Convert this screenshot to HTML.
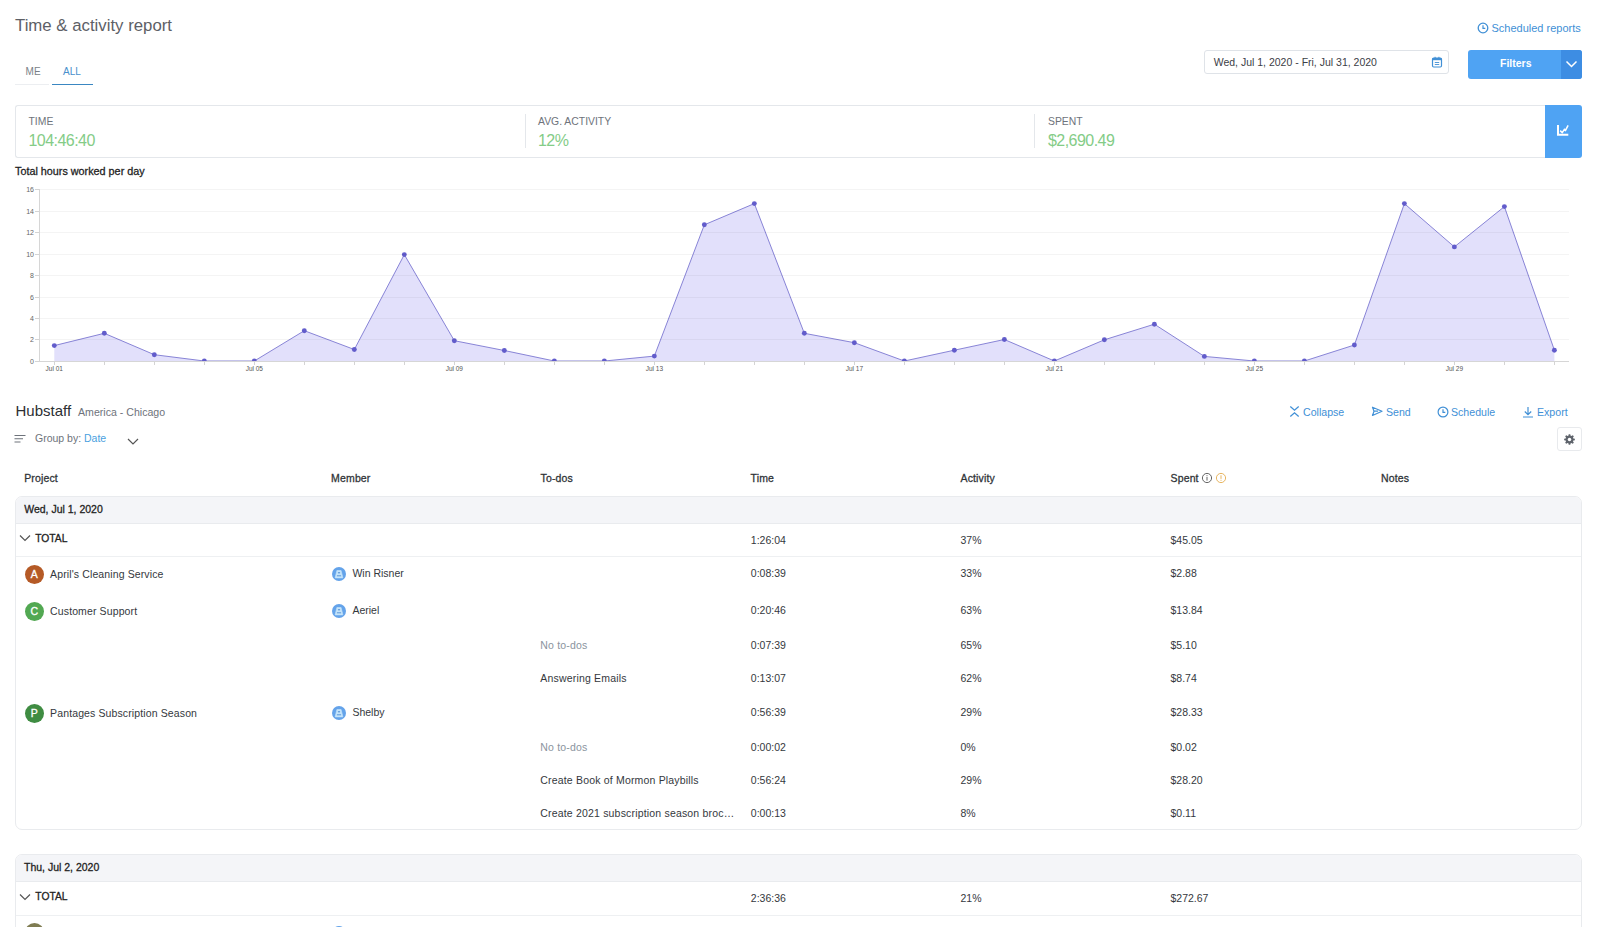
<!DOCTYPE html>
<html><head><meta charset="utf-8"><title>Time &amp; activity report</title>
<style>
html,body{margin:0;padding:0;background:#fff;}
body{width:1600px;height:927px;overflow:hidden;position:relative;font-family:"Liberation Sans", sans-serif;}
</style></head><body>
<div style="position:absolute;left:15.00px;top:18.00px;font-size:16.8px;line-height:16.8px;color:#5d6066;font-weight:400;letter-spacing:0px;white-space:nowrap;">Time &amp; activity report</div>
<div style="position:absolute;left:25.60px;top:67.00px;font-size:10px;line-height:10px;color:#7a7f87;font-weight:400;letter-spacing:0px;white-space:nowrap;">ME</div>
<div style="position:absolute;left:63.00px;top:67.00px;font-size:10px;line-height:10px;color:#4a90cc;font-weight:400;letter-spacing:0px;white-space:nowrap;">ALL</div>
<div style="position:absolute;left:15px;top:84px;width:34px;height:1px;box-sizing:border-box;background:#eceef1"></div>
<div style="position:absolute;left:52px;top:83.8px;width:41px;height:1.6000000000000085px;box-sizing:border-box;background:#3a87c2"></div>
<svg style="position:absolute;left:1477px;top:22px;" width="12" height="12" viewBox="0 0 12 12"><circle cx="6" cy="6" r="4.8" fill="none" stroke="#4190d6" stroke-width="1.3"/><path d="M6 3.3V6.3H8.3" fill="none" stroke="#4190d6" stroke-width="1.2"/></svg>
<div style="position:absolute;left:1491.50px;top:23.00px;font-size:11px;line-height:11px;color:#4190d6;font-weight:400;letter-spacing:0px;white-space:nowrap;">Scheduled reports</div>
<div style="position:absolute;left:1204px;top:50px;width:245px;height:24px;box-sizing:border-box;border:1px solid #dfe3e8;border-radius:3px;background:#fff"></div>
<div style="position:absolute;left:1213.70px;top:57.00px;font-size:10.5px;line-height:10.5px;color:#3c4046;font-weight:400;letter-spacing:0px;white-space:nowrap;">Wed, Jul 1, 2020 - Fri, Jul 31, 2020</div>
<svg style="position:absolute;left:1431px;top:56px;" width="12" height="12" viewBox="0 0 12 12"><rect x="1.5" y="2" width="9" height="9" rx="1.2" fill="none" stroke="#4190d6" stroke-width="1.2"/><rect x="1.5" y="2" width="9" height="2.2" fill="#4190d6"/><rect x="3.6" y="0.8" width="1" height="2" fill="#4190d6"/><rect x="7.4" y="0.8" width="1" height="2" fill="#4190d6"/><rect x="3.8" y="6" width="4.4" height="0.9" fill="#4190d6"/><rect x="3.8" y="8" width="4.4" height="0.9" fill="#4190d6"/></svg>
<div style="position:absolute;left:1468px;top:50px;width:114px;height:29px;box-sizing:border-box;background:#4fa3f3;border-radius:3px"></div>
<div style="position:absolute;left:1561px;top:50px;width:21px;height:29px;box-sizing:border-box;background:#3d8de3;border-radius:0 3px 3px 0"></div>
<div style="position:absolute;left:1500.00px;top:58.00px;font-size:10.5px;line-height:10.5px;color:#fff;font-weight:700;letter-spacing:0px;white-space:nowrap;">Filters</div>
<svg style="position:absolute;left:1565px;top:59px;" width="13" height="10" viewBox="0 0 13 10"><path d="M1.5 2.5L6.5 7.5L11.5 2.5" fill="none" stroke="#fff" stroke-width="1.5"/></svg>
<div style="position:absolute;left:15px;top:105px;width:1531px;height:53px;box-sizing:border-box;border:1px solid #e4e7eb;border-right:none;border-radius:3px 0 0 3px;background:#fff"></div>
<div style="position:absolute;left:1545px;top:105px;width:37px;height:53px;box-sizing:border-box;background:#4fa3f3;border-radius:0 3px 3px 0"></div>
<svg style="position:absolute;left:1555px;top:123px;" width="16" height="15" viewBox="0 0 16 15"><path d="M3 2V11.7H13.3" fill="none" stroke="#fff" stroke-width="2"/><path d="M5.2 7.6L7.3 9.7L9.5 6.2L10.4 7.6L13.1 2.4" fill="none" stroke="#fff" stroke-width="1.5" stroke-linejoin="round"/></svg>
<div style="position:absolute;left:525px;top:114px;width:1px;height:34px;box-sizing:border-box;background:#e4e7eb"></div>
<div style="position:absolute;left:1034px;top:114px;width:1px;height:34px;box-sizing:border-box;background:#e4e7eb"></div>
<div style="position:absolute;left:28.50px;top:117.00px;font-size:10.4px;line-height:10.4px;color:#6e737b;font-weight:400;letter-spacing:0px;white-space:nowrap;">TIME</div>
<div style="position:absolute;left:28.50px;top:133.00px;font-size:16px;line-height:16px;color:#84cc87;font-weight:400;letter-spacing:-0.55px;white-space:nowrap;">104:46:40</div>
<div style="position:absolute;left:538.00px;top:117.00px;font-size:10.4px;line-height:10.4px;color:#6e737b;font-weight:400;letter-spacing:0px;white-space:nowrap;">AVG. ACTIVITY</div>
<div style="position:absolute;left:538.00px;top:133.00px;font-size:16px;line-height:16px;color:#84cc87;font-weight:400;letter-spacing:-0.55px;white-space:nowrap;">12%</div>
<div style="position:absolute;left:1048.00px;top:117.00px;font-size:10.4px;line-height:10.4px;color:#6e737b;font-weight:400;letter-spacing:0px;white-space:nowrap;">SPENT</div>
<div style="position:absolute;left:1048.00px;top:133.00px;font-size:16px;line-height:16px;color:#84cc87;font-weight:400;letter-spacing:-0.55px;white-space:nowrap;">$2,690.49</div>
<div style="position:absolute;left:15.00px;top:166.00px;font-size:10.8px;line-height:10.8px;color:#222;font-weight:400;letter-spacing:0px;white-space:nowrap;-webkit-text-stroke:0.28px #222;">Total hours worked per day</div>
<svg style="position:absolute;left:0px;top:180px;" width="1600" height="200" viewBox="0 180 1600 200"><line x1="35" y1="361.5" x2="40" y2="361.5" stroke="#d4d4d4" stroke-width="1"/><text x="34" y="363.90" text-anchor="end" font-size="7" fill="#666" font-family="Liberation Sans">0</text><line x1="35" y1="339.5" x2="40" y2="339.5" stroke="#d4d4d4" stroke-width="1"/><text x="34" y="341.90" text-anchor="end" font-size="7" fill="#666" font-family="Liberation Sans">2</text><line x1="35" y1="318.5" x2="40" y2="318.5" stroke="#d4d4d4" stroke-width="1"/><text x="34" y="320.90" text-anchor="end" font-size="7" fill="#666" font-family="Liberation Sans">4</text><line x1="35" y1="297.5" x2="40" y2="297.5" stroke="#d4d4d4" stroke-width="1"/><text x="34" y="299.90" text-anchor="end" font-size="7" fill="#666" font-family="Liberation Sans">6</text><line x1="35" y1="275.5" x2="40" y2="275.5" stroke="#d4d4d4" stroke-width="1"/><text x="34" y="277.90" text-anchor="end" font-size="7" fill="#666" font-family="Liberation Sans">8</text><line x1="35" y1="254.5" x2="40" y2="254.5" stroke="#d4d4d4" stroke-width="1"/><text x="34" y="256.90" text-anchor="end" font-size="7" fill="#666" font-family="Liberation Sans">10</text><line x1="35" y1="232.5" x2="40" y2="232.5" stroke="#d4d4d4" stroke-width="1"/><text x="34" y="234.90" text-anchor="end" font-size="7" fill="#666" font-family="Liberation Sans">12</text><line x1="35" y1="211.5" x2="40" y2="211.5" stroke="#d4d4d4" stroke-width="1"/><text x="34" y="213.90" text-anchor="end" font-size="7" fill="#666" font-family="Liberation Sans">14</text><line x1="35" y1="189.5" x2="40" y2="189.5" stroke="#d4d4d4" stroke-width="1"/><text x="34" y="191.90" text-anchor="end" font-size="7" fill="#666" font-family="Liberation Sans">16</text><clipPath id="cp"><rect x="0" y="0" width="1600" height="361"/></clipPath><g clip-path="url(#cp)"><polygon points="54.30,361 54.30,345.60 104.30,333.30 154.31,354.70 204.31,361.00 254.31,361.00 304.31,330.70 354.32,349.50 404.32,254.60 454.32,340.70 504.33,350.50 554.33,361.00 604.33,361.00 654.34,356.10 704.34,224.80 754.34,203.60 804.34,333.30 854.35,342.70 904.35,361.00 954.35,350.20 1004.36,339.50 1054.36,361.00 1104.36,339.80 1154.37,324.20 1204.37,356.40 1254.37,361.00 1304.38,361.00 1354.38,345.00 1404.38,203.60 1454.38,246.90 1504.39,206.60 1554.39,350.20 1554.39,361" fill="#e2e0fb"/><polyline points="54.30,345.60 104.30,333.30 154.31,354.70 204.31,361.00 254.31,361.00 304.31,330.70 354.32,349.50 404.32,254.60 454.32,340.70 504.33,350.50 554.33,361.00 604.33,361.00 654.34,356.10 704.34,224.80 754.34,203.60 804.34,333.30 854.35,342.70 904.35,361.00 954.35,350.20 1004.36,339.50 1054.36,361.00 1104.36,339.80 1154.37,324.20 1204.37,356.40 1254.37,361.00 1304.38,361.00 1354.38,345.00 1404.38,203.60 1454.38,246.90 1504.39,206.60 1554.39,350.20" fill="none" stroke="#7570cf" stroke-width="0.85"/><circle cx="54.30" cy="345.60" r="2.45" fill="#625ccb"/><circle cx="104.30" cy="333.30" r="2.45" fill="#625ccb"/><circle cx="154.31" cy="354.70" r="2.45" fill="#625ccb"/><circle cx="204.31" cy="361.00" r="2.45" fill="#625ccb"/><circle cx="254.31" cy="361.00" r="2.45" fill="#625ccb"/><circle cx="304.31" cy="330.70" r="2.45" fill="#625ccb"/><circle cx="354.32" cy="349.50" r="2.45" fill="#625ccb"/><circle cx="404.32" cy="254.60" r="2.45" fill="#625ccb"/><circle cx="454.32" cy="340.70" r="2.45" fill="#625ccb"/><circle cx="504.33" cy="350.50" r="2.45" fill="#625ccb"/><circle cx="554.33" cy="361.00" r="2.45" fill="#625ccb"/><circle cx="604.33" cy="361.00" r="2.45" fill="#625ccb"/><circle cx="654.34" cy="356.10" r="2.45" fill="#625ccb"/><circle cx="704.34" cy="224.80" r="2.45" fill="#625ccb"/><circle cx="754.34" cy="203.60" r="2.45" fill="#625ccb"/><circle cx="804.34" cy="333.30" r="2.45" fill="#625ccb"/><circle cx="854.35" cy="342.70" r="2.45" fill="#625ccb"/><circle cx="904.35" cy="361.00" r="2.45" fill="#625ccb"/><circle cx="954.35" cy="350.20" r="2.45" fill="#625ccb"/><circle cx="1004.36" cy="339.50" r="2.45" fill="#625ccb"/><circle cx="1054.36" cy="361.00" r="2.45" fill="#625ccb"/><circle cx="1104.36" cy="339.80" r="2.45" fill="#625ccb"/><circle cx="1154.37" cy="324.20" r="2.45" fill="#625ccb"/><circle cx="1204.37" cy="356.40" r="2.45" fill="#625ccb"/><circle cx="1254.37" cy="361.00" r="2.45" fill="#625ccb"/><circle cx="1304.38" cy="361.00" r="2.45" fill="#625ccb"/><circle cx="1354.38" cy="345.00" r="2.45" fill="#625ccb"/><circle cx="1404.38" cy="203.60" r="2.45" fill="#625ccb"/><circle cx="1454.38" cy="246.90" r="2.45" fill="#625ccb"/><circle cx="1504.39" cy="206.60" r="2.45" fill="#625ccb"/><circle cx="1554.39" cy="350.20" r="2.45" fill="#625ccb"/></g><line x1="40" y1="339.5" x2="1569" y2="339.5" stroke="rgba(0,0,0,0.045)" stroke-width="1"/><line x1="40" y1="318.5" x2="1569" y2="318.5" stroke="rgba(0,0,0,0.045)" stroke-width="1"/><line x1="40" y1="297.5" x2="1569" y2="297.5" stroke="rgba(0,0,0,0.045)" stroke-width="1"/><line x1="40" y1="275.5" x2="1569" y2="275.5" stroke="rgba(0,0,0,0.045)" stroke-width="1"/><line x1="40" y1="254.5" x2="1569" y2="254.5" stroke="rgba(0,0,0,0.045)" stroke-width="1"/><line x1="40" y1="232.5" x2="1569" y2="232.5" stroke="rgba(0,0,0,0.045)" stroke-width="1"/><line x1="40" y1="211.5" x2="1569" y2="211.5" stroke="rgba(0,0,0,0.045)" stroke-width="1"/><line x1="40" y1="189.5" x2="1569" y2="189.5" stroke="rgba(0,0,0,0.045)" stroke-width="1"/><line x1="39.5" y1="189" x2="39.5" y2="362" stroke="#d6d6d6" stroke-width="1"/><line x1="39" y1="361.5" x2="1569" y2="361.5" stroke="#d6d6d6" stroke-width="1"/><line x1="54.5" y1="362" x2="54.5" y2="365" stroke="#d4d4d4" stroke-width="1"/><text x="54.30" y="371.00" text-anchor="middle" font-size="6.5" fill="#555" font-family="Liberation Sans">Jul 01</text><line x1="104.5" y1="362" x2="104.5" y2="365" stroke="#d4d4d4" stroke-width="1"/><line x1="154.5" y1="362" x2="154.5" y2="365" stroke="#d4d4d4" stroke-width="1"/><line x1="204.5" y1="362" x2="204.5" y2="365" stroke="#d4d4d4" stroke-width="1"/><line x1="254.5" y1="362" x2="254.5" y2="365" stroke="#d4d4d4" stroke-width="1"/><text x="254.31" y="371.00" text-anchor="middle" font-size="6.5" fill="#555" font-family="Liberation Sans">Jul 05</text><line x1="304.5" y1="362" x2="304.5" y2="365" stroke="#d4d4d4" stroke-width="1"/><line x1="354.5" y1="362" x2="354.5" y2="365" stroke="#d4d4d4" stroke-width="1"/><line x1="404.5" y1="362" x2="404.5" y2="365" stroke="#d4d4d4" stroke-width="1"/><line x1="454.5" y1="362" x2="454.5" y2="365" stroke="#d4d4d4" stroke-width="1"/><text x="454.32" y="371.00" text-anchor="middle" font-size="6.5" fill="#555" font-family="Liberation Sans">Jul 09</text><line x1="504.5" y1="362" x2="504.5" y2="365" stroke="#d4d4d4" stroke-width="1"/><line x1="554.5" y1="362" x2="554.5" y2="365" stroke="#d4d4d4" stroke-width="1"/><line x1="604.5" y1="362" x2="604.5" y2="365" stroke="#d4d4d4" stroke-width="1"/><line x1="654.5" y1="362" x2="654.5" y2="365" stroke="#d4d4d4" stroke-width="1"/><text x="654.34" y="371.00" text-anchor="middle" font-size="6.5" fill="#555" font-family="Liberation Sans">Jul 13</text><line x1="704.5" y1="362" x2="704.5" y2="365" stroke="#d4d4d4" stroke-width="1"/><line x1="754.5" y1="362" x2="754.5" y2="365" stroke="#d4d4d4" stroke-width="1"/><line x1="804.5" y1="362" x2="804.5" y2="365" stroke="#d4d4d4" stroke-width="1"/><line x1="854.5" y1="362" x2="854.5" y2="365" stroke="#d4d4d4" stroke-width="1"/><text x="854.35" y="371.00" text-anchor="middle" font-size="6.5" fill="#555" font-family="Liberation Sans">Jul 17</text><line x1="904.5" y1="362" x2="904.5" y2="365" stroke="#d4d4d4" stroke-width="1"/><line x1="954.5" y1="362" x2="954.5" y2="365" stroke="#d4d4d4" stroke-width="1"/><line x1="1004.5" y1="362" x2="1004.5" y2="365" stroke="#d4d4d4" stroke-width="1"/><line x1="1054.5" y1="362" x2="1054.5" y2="365" stroke="#d4d4d4" stroke-width="1"/><text x="1054.36" y="371.00" text-anchor="middle" font-size="6.5" fill="#555" font-family="Liberation Sans">Jul 21</text><line x1="1104.5" y1="362" x2="1104.5" y2="365" stroke="#d4d4d4" stroke-width="1"/><line x1="1154.5" y1="362" x2="1154.5" y2="365" stroke="#d4d4d4" stroke-width="1"/><line x1="1204.5" y1="362" x2="1204.5" y2="365" stroke="#d4d4d4" stroke-width="1"/><line x1="1254.5" y1="362" x2="1254.5" y2="365" stroke="#d4d4d4" stroke-width="1"/><text x="1254.37" y="371.00" text-anchor="middle" font-size="6.5" fill="#555" font-family="Liberation Sans">Jul 25</text><line x1="1304.5" y1="362" x2="1304.5" y2="365" stroke="#d4d4d4" stroke-width="1"/><line x1="1354.5" y1="362" x2="1354.5" y2="365" stroke="#d4d4d4" stroke-width="1"/><line x1="1404.5" y1="362" x2="1404.5" y2="365" stroke="#d4d4d4" stroke-width="1"/><line x1="1454.5" y1="362" x2="1454.5" y2="365" stroke="#d4d4d4" stroke-width="1"/><text x="1454.38" y="371.00" text-anchor="middle" font-size="6.5" fill="#555" font-family="Liberation Sans">Jul 29</text><line x1="1504.5" y1="362" x2="1504.5" y2="365" stroke="#d4d4d4" stroke-width="1"/><line x1="1554.5" y1="362" x2="1554.5" y2="365" stroke="#d4d4d4" stroke-width="1"/></svg>
<div style="position:absolute;left:15.50px;top:403.00px;font-size:15px;line-height:15px;color:#2c2f33;font-weight:400;letter-spacing:0px;white-space:nowrap;">Hubstaff</div>
<div style="position:absolute;left:78.00px;top:407.00px;font-size:10.6px;line-height:10.6px;color:#6e737b;font-weight:400;letter-spacing:0px;white-space:nowrap;">America - Chicago</div>
<svg style="position:absolute;left:14px;top:434px;" width="12" height="10" viewBox="0 0 12 10"><path d="M0.5 1.5H11.5M0.5 4.8H9M0.5 8H6.5" stroke="#6e737b" stroke-width="1.1"/></svg>
<div style="position:absolute;left:35.00px;top:433.00px;font-size:10.5px;line-height:10.5px;color:#6e737b;font-weight:400;letter-spacing:0px;white-space:nowrap;">Group by: <span style="color:#4a9fe0">Date</span></div>
<svg style="position:absolute;left:127px;top:437px;" width="12" height="9" viewBox="0 0 12 9"><path d="M1 2L6 7L11 2" fill="none" stroke="#555" stroke-width="1.2"/></svg>
<svg style="position:absolute;left:1289px;top:405px;" width="11" height="13" viewBox="0 0 11 13"><path d="M1.3 1.5L5.5 5.2L9.7 1.5M1.3 11.5L5.5 7.8L9.7 11.5" fill="none" stroke="#4190d6" stroke-width="1.3"/></svg>
<div style="position:absolute;left:1303.00px;top:407.00px;font-size:10.6px;line-height:10.6px;color:#4190d6;font-weight:400;letter-spacing:0px;white-space:nowrap;">Collapse</div>
<svg style="position:absolute;left:1371px;top:406px;" width="12" height="11" viewBox="0 0 12 11"><path d="M1.5 1.2L11 5.2L1.5 9.5L3 5.2Z M3 5.2H7" fill="none" stroke="#4190d6" stroke-width="1.2" stroke-linejoin="round"/></svg>
<div style="position:absolute;left:1386.00px;top:407.00px;font-size:10.6px;line-height:10.6px;color:#4190d6;font-weight:400;letter-spacing:0px;white-space:nowrap;">Send</div>
<svg style="position:absolute;left:1436.5px;top:405.5px;" width="12" height="12" viewBox="0 0 12 12"><circle cx="6" cy="6" r="4.9" fill="none" stroke="#4190d6" stroke-width="1.2"/><path d="M6 3.3V6.3H8.3" fill="none" stroke="#4190d6" stroke-width="1.2"/></svg>
<div style="position:absolute;left:1451.00px;top:407.00px;font-size:10.6px;line-height:10.6px;color:#4190d6;font-weight:400;letter-spacing:0px;white-space:nowrap;">Schedule</div>
<svg style="position:absolute;left:1522px;top:406px;" width="12" height="12" viewBox="0 0 12 12"><path d="M6 1V8.5M2.8 5.5L6 8.7L9.2 5.5M1 11H11" fill="none" stroke="#4190d6" stroke-width="1.2"/></svg>
<div style="position:absolute;left:1537.00px;top:407.00px;font-size:10.6px;line-height:10.6px;color:#4190d6;font-weight:400;letter-spacing:0px;white-space:nowrap;">Export</div>
<div style="position:absolute;left:1557px;top:426.5px;width:25px;height:24.0px;box-sizing:border-box;border:1px solid #e8eaed;border-radius:3px;background:#fff"></div>
<svg style="position:absolute;left:1564px;top:434px;" width="11" height="11" viewBox="0 0 11 11"><polygon points="4.75,0.15 6.25,0.15 6.84,2.27 8.75,1.19 9.81,2.25 8.73,4.16 10.85,4.75 10.85,6.25 8.73,6.84 9.81,8.75 8.75,9.81 6.84,8.73 6.25,10.85 4.75,10.85 4.16,8.73 2.25,9.81 1.19,8.75 2.27,6.84 0.15,6.25 0.15,4.75 2.27,4.16 1.19,2.25 2.25,1.19 4.16,2.27" fill="#5f646c"/><circle cx="5.5" cy="5.5" r="3.7" fill="#5f646c"/><circle cx="5.5" cy="5.5" r="1.75" fill="#fff"/></svg>
<div style="position:absolute;left:24.20px;top:473.00px;font-size:10.5px;line-height:10.5px;color:#2f3337;font-weight:400;letter-spacing:0.15px;white-space:nowrap;-webkit-text-stroke:0.28px #2f3337;">Project</div>
<div style="position:absolute;left:331.10px;top:473.00px;font-size:10.5px;line-height:10.5px;color:#2f3337;font-weight:400;letter-spacing:0.15px;white-space:nowrap;-webkit-text-stroke:0.28px #2f3337;">Member</div>
<div style="position:absolute;left:540.50px;top:473.00px;font-size:10.5px;line-height:10.5px;color:#2f3337;font-weight:400;letter-spacing:0.15px;white-space:nowrap;-webkit-text-stroke:0.28px #2f3337;">To-dos</div>
<div style="position:absolute;left:750.50px;top:473.00px;font-size:10.5px;line-height:10.5px;color:#2f3337;font-weight:400;letter-spacing:0.15px;white-space:nowrap;-webkit-text-stroke:0.28px #2f3337;">Time</div>
<div style="position:absolute;left:960.50px;top:473.00px;font-size:10.5px;line-height:10.5px;color:#2f3337;font-weight:400;letter-spacing:0.15px;white-space:nowrap;-webkit-text-stroke:0.28px #2f3337;">Activity</div>
<div style="position:absolute;left:1170.50px;top:473.00px;font-size:10.5px;line-height:10.5px;color:#2f3337;font-weight:400;letter-spacing:0.15px;white-space:nowrap;-webkit-text-stroke:0.28px #2f3337;">Spent</div>
<div style="position:absolute;left:1381.00px;top:473.00px;font-size:10.5px;line-height:10.5px;color:#2f3337;font-weight:400;letter-spacing:0.15px;white-space:nowrap;-webkit-text-stroke:0.28px #2f3337;">Notes</div>
<svg style="position:absolute;left:1201px;top:472px;" width="12" height="12" viewBox="0 0 12 12"><circle cx="6" cy="6" r="4.6" fill="none" stroke="#666" stroke-width="1"/><rect x="5.5" y="5" width="1" height="3.6" fill="#666"/><rect x="5.5" y="3.2" width="1" height="1" fill="#666"/></svg>
<svg style="position:absolute;left:1215px;top:472px;" width="12" height="12" viewBox="0 0 12 12"><circle cx="6" cy="6" r="4.6" fill="none" stroke="#e8b662" stroke-width="1"/><rect x="5.5" y="3.3" width="1" height="3.6" fill="#e8b662"/><rect x="5.5" y="7.8" width="1" height="1" fill="#e8b662"/></svg>
<div style="position:absolute;left:15px;top:496px;width:1567px;height:334px;box-sizing:border-box;border:1px solid #e9ebee;border-radius:7px;background:#fff;overflow:hidden"><div style="height:26px;background:#f4f5f8;border-bottom:1px solid #e9ebee"></div></div>
<div style="position:absolute;left:24.20px;top:504.00px;font-size:10.5px;line-height:10.5px;color:#222;font-weight:400;letter-spacing:0px;white-space:nowrap;-webkit-text-stroke:0.28px #222;">Wed, Jul 1, 2020</div>
<svg style="position:absolute;left:18px;top:533px;" width="14" height="10" viewBox="0 0 14 10"><path d="M2 2.5L7 7.5L12 2.5" fill="none" stroke="#555" stroke-width="1.2"/></svg>
<div style="position:absolute;left:35.20px;top:534.00px;font-size:10.3px;line-height:10.3px;color:#222;font-weight:400;letter-spacing:0px;white-space:nowrap;-webkit-text-stroke:0.28px #222;">TOTAL</div>
<div style="position:absolute;left:750.80px;top:535.00px;font-size:10.5px;line-height:10.5px;color:#34383d;font-weight:400;letter-spacing:0px;white-space:nowrap;">1:26:04</div>
<div style="position:absolute;left:960.50px;top:535.00px;font-size:10.5px;line-height:10.5px;color:#34383d;font-weight:400;letter-spacing:0px;white-space:nowrap;">37%</div>
<div style="position:absolute;left:1170.50px;top:535.00px;font-size:10.5px;line-height:10.5px;color:#34383d;font-weight:400;letter-spacing:0px;white-space:nowrap;">$45.05</div>
<div style="position:absolute;left:16px;top:556px;width:1565px;height:1px;box-sizing:border-box;background:#eef0f2"></div>
<div style="position:absolute;left:24.70px;top:565.00px;width:19px;height:19px;border-radius:50%;background:#b55a26;color:#fff;font-size:10.5px;font-weight:400;-webkit-text-stroke:0.3px #fff;text-align:center;line-height:19px">A</div>
<div style="position:absolute;left:50.10px;top:569.00px;font-size:10.5px;line-height:10.5px;color:#34383d;font-weight:400;letter-spacing:0.12px;white-space:nowrap;">April&#39;s Cleaning Service</div>
<svg style="position:absolute;left:332px;top:567.4000000000001px;" width="14" height="14" viewBox="0 0 14 14"><circle cx="7" cy="7" r="7" fill="#64a3ea"/><path d="M4.9 3.5H9.1L10.9 10.9H3.1Z" fill="#c4e4fa" stroke="#c4e4fa" stroke-width="0.6" stroke-linejoin="round"/><ellipse cx="7" cy="5.8" rx="1.2" ry="0.8" fill="#5f98d8"/><rect x="4.9" y="8.3" width="4.2" height="1" fill="#5f98d8"/></svg>
<div style="position:absolute;left:352.40px;top:568.00px;font-size:10.5px;line-height:10.5px;color:#34383d;font-weight:400;letter-spacing:0px;white-space:nowrap;">Win Risner</div>
<div style="position:absolute;left:750.80px;top:568.00px;font-size:10.5px;line-height:10.5px;color:#34383d;font-weight:400;letter-spacing:0px;white-space:nowrap;">0:08:39</div>
<div style="position:absolute;left:960.50px;top:568.00px;font-size:10.5px;line-height:10.5px;color:#34383d;font-weight:400;letter-spacing:0px;white-space:nowrap;">33%</div>
<div style="position:absolute;left:1170.50px;top:568.00px;font-size:10.5px;line-height:10.5px;color:#34383d;font-weight:400;letter-spacing:0px;white-space:nowrap;">$2.88</div>
<div style="position:absolute;left:24.70px;top:601.70px;width:19px;height:19px;border-radius:50%;background:#52a852;color:#fff;font-size:10.5px;font-weight:400;-webkit-text-stroke:0.3px #fff;text-align:center;line-height:19px">C</div>
<div style="position:absolute;left:50.10px;top:606.00px;font-size:10.5px;line-height:10.5px;color:#34383d;font-weight:400;letter-spacing:0.12px;white-space:nowrap;">Customer Support</div>
<svg style="position:absolute;left:332px;top:604.1px;" width="14" height="14" viewBox="0 0 14 14"><circle cx="7" cy="7" r="7" fill="#64a3ea"/><path d="M4.9 3.5H9.1L10.9 10.9H3.1Z" fill="#c4e4fa" stroke="#c4e4fa" stroke-width="0.6" stroke-linejoin="round"/><ellipse cx="7" cy="5.8" rx="1.2" ry="0.8" fill="#5f98d8"/><rect x="4.9" y="8.3" width="4.2" height="1" fill="#5f98d8"/></svg>
<div style="position:absolute;left:352.40px;top:605.00px;font-size:10.5px;line-height:10.5px;color:#34383d;font-weight:400;letter-spacing:0px;white-space:nowrap;">Aeriel</div>
<div style="position:absolute;left:750.80px;top:605.00px;font-size:10.5px;line-height:10.5px;color:#34383d;font-weight:400;letter-spacing:0px;white-space:nowrap;">0:20:46</div>
<div style="position:absolute;left:960.50px;top:605.00px;font-size:10.5px;line-height:10.5px;color:#34383d;font-weight:400;letter-spacing:0px;white-space:nowrap;">63%</div>
<div style="position:absolute;left:1170.50px;top:605.00px;font-size:10.5px;line-height:10.5px;color:#34383d;font-weight:400;letter-spacing:0px;white-space:nowrap;">$13.84</div>
<div style="position:absolute;left:540.30px;top:640.00px;font-size:10.5px;line-height:10.5px;color:#8b949e;font-weight:400;letter-spacing:0.18px;white-space:nowrap;">No to-dos</div>
<div style="position:absolute;left:750.80px;top:640.00px;font-size:10.5px;line-height:10.5px;color:#34383d;font-weight:400;letter-spacing:0px;white-space:nowrap;">0:07:39</div>
<div style="position:absolute;left:960.50px;top:640.00px;font-size:10.5px;line-height:10.5px;color:#34383d;font-weight:400;letter-spacing:0px;white-space:nowrap;">65%</div>
<div style="position:absolute;left:1170.50px;top:640.00px;font-size:10.5px;line-height:10.5px;color:#34383d;font-weight:400;letter-spacing:0px;white-space:nowrap;">$5.10</div>
<div style="position:absolute;left:540.30px;top:673.00px;font-size:10.5px;line-height:10.5px;color:#34383d;font-weight:400;letter-spacing:0.18px;white-space:nowrap;">Answering Emails</div>
<div style="position:absolute;left:750.80px;top:673.00px;font-size:10.5px;line-height:10.5px;color:#34383d;font-weight:400;letter-spacing:0px;white-space:nowrap;">0:13:07</div>
<div style="position:absolute;left:960.50px;top:673.00px;font-size:10.5px;line-height:10.5px;color:#34383d;font-weight:400;letter-spacing:0px;white-space:nowrap;">62%</div>
<div style="position:absolute;left:1170.50px;top:673.00px;font-size:10.5px;line-height:10.5px;color:#34383d;font-weight:400;letter-spacing:0px;white-space:nowrap;">$8.74</div>
<div style="position:absolute;left:24.70px;top:704.00px;width:19px;height:19px;border-radius:50%;background:#3f8c42;color:#fff;font-size:10.5px;font-weight:400;-webkit-text-stroke:0.3px #fff;text-align:center;line-height:19px">P</div>
<div style="position:absolute;left:50.10px;top:708.00px;font-size:10.5px;line-height:10.5px;color:#34383d;font-weight:400;letter-spacing:0.12px;white-space:nowrap;">Pantages Subscription Season</div>
<svg style="position:absolute;left:332px;top:706.4000000000001px;" width="14" height="14" viewBox="0 0 14 14"><circle cx="7" cy="7" r="7" fill="#64a3ea"/><path d="M4.9 3.5H9.1L10.9 10.9H3.1Z" fill="#c4e4fa" stroke="#c4e4fa" stroke-width="0.6" stroke-linejoin="round"/><ellipse cx="7" cy="5.8" rx="1.2" ry="0.8" fill="#5f98d8"/><rect x="4.9" y="8.3" width="4.2" height="1" fill="#5f98d8"/></svg>
<div style="position:absolute;left:352.40px;top:707.00px;font-size:10.5px;line-height:10.5px;color:#34383d;font-weight:400;letter-spacing:0px;white-space:nowrap;">Shelby</div>
<div style="position:absolute;left:750.80px;top:707.00px;font-size:10.5px;line-height:10.5px;color:#34383d;font-weight:400;letter-spacing:0px;white-space:nowrap;">0:56:39</div>
<div style="position:absolute;left:960.50px;top:707.00px;font-size:10.5px;line-height:10.5px;color:#34383d;font-weight:400;letter-spacing:0px;white-space:nowrap;">29%</div>
<div style="position:absolute;left:1170.50px;top:707.00px;font-size:10.5px;line-height:10.5px;color:#34383d;font-weight:400;letter-spacing:0px;white-space:nowrap;">$28.33</div>
<div style="position:absolute;left:540.30px;top:742.00px;font-size:10.5px;line-height:10.5px;color:#8b949e;font-weight:400;letter-spacing:0.18px;white-space:nowrap;">No to-dos</div>
<div style="position:absolute;left:750.80px;top:742.00px;font-size:10.5px;line-height:10.5px;color:#34383d;font-weight:400;letter-spacing:0px;white-space:nowrap;">0:00:02</div>
<div style="position:absolute;left:960.50px;top:742.00px;font-size:10.5px;line-height:10.5px;color:#34383d;font-weight:400;letter-spacing:0px;white-space:nowrap;">0%</div>
<div style="position:absolute;left:1170.50px;top:742.00px;font-size:10.5px;line-height:10.5px;color:#34383d;font-weight:400;letter-spacing:0px;white-space:nowrap;">$0.02</div>
<div style="position:absolute;left:540.30px;top:775.00px;font-size:10.5px;line-height:10.5px;color:#34383d;font-weight:400;letter-spacing:0.18px;white-space:nowrap;">Create Book of Mormon Playbills</div>
<div style="position:absolute;left:750.80px;top:775.00px;font-size:10.5px;line-height:10.5px;color:#34383d;font-weight:400;letter-spacing:0px;white-space:nowrap;">0:56:24</div>
<div style="position:absolute;left:960.50px;top:775.00px;font-size:10.5px;line-height:10.5px;color:#34383d;font-weight:400;letter-spacing:0px;white-space:nowrap;">29%</div>
<div style="position:absolute;left:1170.50px;top:775.00px;font-size:10.5px;line-height:10.5px;color:#34383d;font-weight:400;letter-spacing:0px;white-space:nowrap;">$28.20</div>
<div style="position:absolute;left:540.30px;top:808.00px;font-size:10.5px;line-height:10.5px;color:#34383d;font-weight:400;letter-spacing:0.18px;white-space:nowrap;">Create 2021 subscription season broc…</div>
<div style="position:absolute;left:750.80px;top:808.00px;font-size:10.5px;line-height:10.5px;color:#34383d;font-weight:400;letter-spacing:0px;white-space:nowrap;">0:00:13</div>
<div style="position:absolute;left:960.50px;top:808.00px;font-size:10.5px;line-height:10.5px;color:#34383d;font-weight:400;letter-spacing:0px;white-space:nowrap;">8%</div>
<div style="position:absolute;left:1170.50px;top:808.00px;font-size:10.5px;line-height:10.5px;color:#34383d;font-weight:400;letter-spacing:0px;white-space:nowrap;">$0.11</div>
<div style="position:absolute;left:15px;top:854px;width:1567px;height:146px;box-sizing:border-box;border:1px solid #e9ebee;border-radius:7px;background:#fff;overflow:hidden"><div style="height:26px;background:#f4f5f8;border-bottom:1px solid #e9ebee"></div></div>
<div style="position:absolute;left:24.00px;top:862.00px;font-size:10.5px;line-height:10.5px;color:#222;font-weight:400;letter-spacing:0px;white-space:nowrap;-webkit-text-stroke:0.28px #222;">Thu, Jul 2, 2020</div>
<svg style="position:absolute;left:18px;top:891.5px;" width="14" height="10" viewBox="0 0 14 10"><path d="M2 2.5L7 7.5L12 2.5" fill="none" stroke="#555" stroke-width="1.2"/></svg>
<div style="position:absolute;left:35.30px;top:892.00px;font-size:10.3px;line-height:10.3px;color:#222;font-weight:400;letter-spacing:0px;white-space:nowrap;-webkit-text-stroke:0.28px #222;">TOTAL</div>
<div style="position:absolute;left:750.80px;top:893.00px;font-size:10.5px;line-height:10.5px;color:#34383d;font-weight:400;letter-spacing:0px;white-space:nowrap;">2:36:36</div>
<div style="position:absolute;left:960.50px;top:893.00px;font-size:10.5px;line-height:10.5px;color:#34383d;font-weight:400;letter-spacing:0px;white-space:nowrap;">21%</div>
<div style="position:absolute;left:1170.50px;top:893.00px;font-size:10.5px;line-height:10.5px;color:#34383d;font-weight:400;letter-spacing:0px;white-space:nowrap;">$272.67</div>
<div style="position:absolute;left:16px;top:915px;width:1565px;height:1px;box-sizing:border-box;background:#eef0f2"></div>
<div style="position:absolute;left:24.50px;top:923.00px;width:19px;height:19px;border-radius:50%;background:#7f7c52;color:#fff;font-size:10.5px;font-weight:400;-webkit-text-stroke:0.3px #fff;text-align:center;line-height:19px"></div>
<svg style="position:absolute;left:332px;top:926px;" width="14" height="14" viewBox="0 0 14 14"><circle cx="7" cy="7" r="7" fill="#64a3ea"/><path d="M4.9 3.5H9.1L10.9 10.9H3.1Z" fill="#c4e4fa" stroke="#c4e4fa" stroke-width="0.6" stroke-linejoin="round"/><ellipse cx="7" cy="5.8" rx="1.2" ry="0.8" fill="#5f98d8"/><rect x="4.9" y="8.3" width="4.2" height="1" fill="#5f98d8"/></svg>
<div style="position:absolute;left:1170.50px;top:927.00px;font-size:10.5px;line-height:10.5px;color:#34383d;font-weight:400;letter-spacing:0px;white-space:nowrap;">$37.77</div>
<div style="position:absolute;left:750.80px;top:927.00px;font-size:10.5px;line-height:10.5px;color:#34383d;font-weight:400;letter-spacing:0px;white-space:nowrap;">0:25:46</div>
<div style="position:absolute;left:960.50px;top:927.00px;font-size:10.5px;line-height:10.5px;color:#34383d;font-weight:400;letter-spacing:0px;white-space:nowrap;">33%</div>
</body></html>
